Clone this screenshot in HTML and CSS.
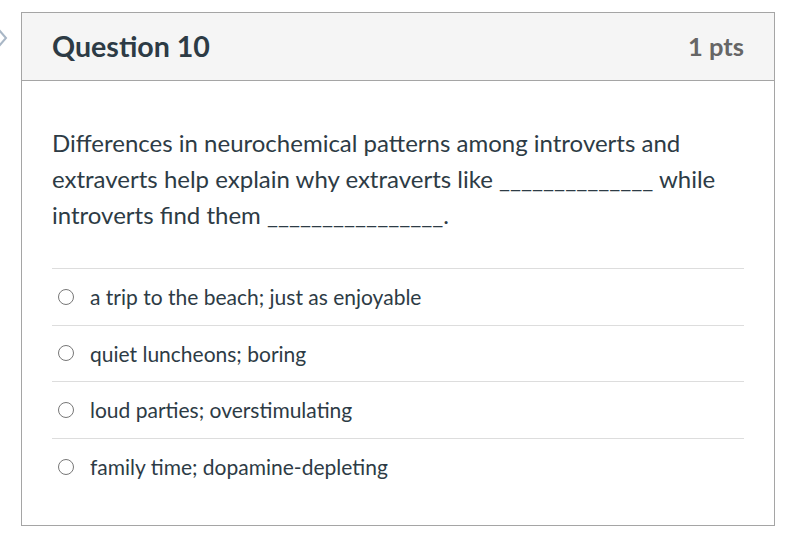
FILE: index.html
```html
<!DOCTYPE html>
<html>
<head>
<meta charset="utf-8">
<link rel="stylesheet" href="styles.css">
</head>
<body>
<div class="page">
  <svg class="chev" width="10" height="20" viewBox="0 0 10 20"><path d="M1 2 L8 10 L1 18" fill="none" stroke="#a9b7c6" stroke-width="2"/></svg>
  <div class="card">
    <div class="header">
      <h2 class="title">Question 10</h2>
      <div class="pts">1 pts</div>
    </div>
    <div class="body">
      <p class="qtext">Differences in neurochemical patterns among introverts and extraverts help explain why extraverts like ______________ while introverts find them ________________.</p>
      <div class="answers">
        <label class="answer"><span class="radio"></span><span>a trip to the beach; just as enjoyable</span></label>
        <label class="answer"><span class="radio"></span><span>quiet luncheons; boring</span></label>
        <label class="answer"><span class="radio"></span><span>loud parties; overstimulating</span></label>
        <label class="answer"><span class="radio"></span><span>family time; dopamine-depleting</span></label>
      </div>
    </div>
  </div>
</div>
</body>
</html>
```
FILE: styles.css
```css
* { box-sizing: border-box; }
html, body { margin: 0; padding: 0; background: #fff; }
body { font-family: Lato, "Noto Sans", sans-serif; color: #2d3b45; }
.page { position: relative; padding: 12px 31px 0 21px; }
.chev { position: absolute; left: -2px; top: 28px; }
.card { border: 1px solid #a5a5a5; width: 754px; height: 514px; }
.header { background: #f5f5f5; border-bottom: 1px solid #a5a5a5; height: 68px; display: flex; align-items: center; justify-content: space-between; padding: 0 30px 1px 30px; }
.title { margin: 0; font-size: 28.6px; font-weight: 700; color: #2d3b45; }
.pts { font-size: 25.5px; font-weight: 700; color: #666; }
.body { padding: 44px 30px 0 30px; }
.qtext { margin: 0; font-size: 24px; line-height: 36px; }
.answers { margin-top: 35px; border-top: 1px solid #ddd; }
.answer { display: flex; align-items: center; height: 56.5px; border-bottom: 1px solid #ddd; font-size: 21px; padding-left: 6px; }
.answer:last-child { border-bottom: none; }
.radio { width: 16px; height: 16px; border: 1.6px solid #777; border-radius: 50%; margin-right: 16px; flex: none; }
```
